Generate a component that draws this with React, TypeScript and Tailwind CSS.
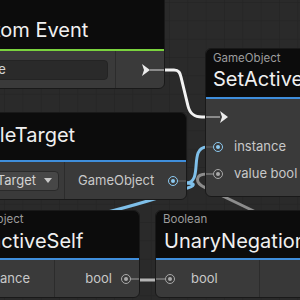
import React from 'react';

// Unity-style visual scripting graph: nodes sit on a free canvas, wires drawn in svg underneath.

const Port = ({ blue }: { blue?: boolean }) => (
  <span
    className={`flex h-[10px] w-[10px] shrink-0 items-center justify-center rounded-full border-[1.5px] ${
      blue ? 'border-[#8cc9f0]' : 'border-[#a9a9a9]'
    }`}
  >
    <span className={`h-[4px] w-[4px] rounded-full ${blue ? 'bg-[#8cc9f0]' : 'bg-[#a9a9a9]'}`} />
  </span>
);

const FlowArrow = () => (
  <svg width="8" height="12" viewBox="0 0 8 12" className="shrink-0">
    <polygon points="0,0 8,6 0,12 2,6" fill="#ececec" />
  </svg>
);

const Wires = () => (
  <svg className="absolute inset-0" width="300" height="300">
    <defs>
      <pattern id="grid" width="18.33" height="18.33" x="5" y="3" patternUnits="userSpaceOnUse">
        <path d="M18.33 0V18.33H0" fill="none" stroke="#222222" strokeWidth="1" />
      </pattern>
    </defs>
    <rect width="300" height="300" fill="url(#grid)" />
    {/* control flow */}
    <path
      d="M164 70 L174 70 C179 70 180 73 181 77 L188 106 C190 114 194 117 202 117 L207 117"
      fill="none"
      stroke="#f2f2f2"
      strokeWidth="3"
    />
    {/* GameObject -> instance */}
    <path d="M186 183 C204 183 188 147 207 147" fill="none" stroke="#7fc0ea" strokeWidth="3" />
    <path d="M186 183 C196 183 196 186 184 189 C165 196 140 204 100 214" fill="none" stroke="#7fc0ea" strokeWidth="3" />
    {/* bool -> value */}
    <path d="M207 174 C195 174 194 183 206 188 L262 215" fill="none" stroke="#8c8c8c" strokeWidth="3" />
    <path d="M138 280 L157 280" fill="none" stroke="#b4b4b4" strokeWidth="3" />
  </svg>
);

export default function App() {
  return (
    <div className="relative h-[300px] w-[300px] overflow-hidden bg-[#2a2a2a] font-['Inter',sans-serif]">
      <Wires />

      {/* Custom Event */}
      <div className="absolute left-[-52px] top-[-10px] w-[217px] overflow-hidden rounded-[6px] border border-[#191919] bg-[#3a3a3a]">
        <div className="h-[58px] whitespace-nowrap bg-[#0c0c0c] pl-[8px] pt-[27px] text-[20px] leading-[24px] text-[#f0f0f0]">
          Custom Event
        </div>
        <div className="h-[2px] bg-[#7ad33e]" />
        <div className="flex h-[37px]">
          <div className="flex w-[167px] items-center border-r border-[#2c2c2c] pl-[12px]">
            <div className="flex h-[20px] w-[147px] items-center overflow-hidden whitespace-nowrap rounded-[4px] border border-[#242424] bg-[#2a2a2a] pl-[2px] text-[13px] text-[#d2d2d2]">
              Toggle
            </div>
          </div>
          <div className="flex flex-1 items-center justify-end">
            <FlowArrow />
            <div className="h-[2px] w-[14px] bg-[#8a8a8a]" />
          </div>
        </div>
      </div>

      {/* SetActive */}
      <div className="absolute left-[205px] top-[48px] w-[160px] overflow-hidden rounded-[6px] border border-[#191919] bg-[#3a3a3a]">
        <div className="h-[48px] whitespace-nowrap bg-[#0c0c0c] pl-[7px] pt-[2px]">
          <div className="text-[11.5px] leading-[14px] text-[#9c9c9c]">GameObject</div>
          <div className="mt-[2px] text-[20px] leading-[24px] text-[#f0f0f0]">SetActive</div>
        </div>
        <div className="h-[2px] bg-[#3f8edb]" />
        <div className="flex flex-col pb-[10px] pt-[6px] text-[13px] text-[#c8c8c8]">
          <div className="flex h-[24px] items-center">
            <div className="h-[2px] w-[14px] bg-[#8a8a8a]" />
            <FlowArrow />
          </div>
          <div className="mt-[6px] flex h-[24px] items-center whitespace-nowrap">
            <div className="h-[2px] w-[7px] bg-[#505050]" />
            <Port blue />
            <span className="ml-[11px]">instance</span>
          </div>
          <div className="mt-[3px] flex h-[24px] items-center whitespace-nowrap">
            <div className="h-[2px] w-[7px] bg-[#6a6a6a]" />
            <Port />
            <span className="ml-[11px]">value bool</span>
          </div>
        </div>
      </div>

      {/* ToggleTarget variable */}
      <div className="absolute left-[-60px] top-[112px] w-[247px] overflow-hidden rounded-[6px] border border-[#191919] bg-[#3a3a3a]">
        <div className="h-[47px] whitespace-nowrap bg-[#0c0c0c] pl-[11px] pt-[10px] text-[20px] leading-[24px] text-[#f0f0f0]">
          ToggleTarget
        </div>
        <div className="h-[2px] bg-[#3f8edb]" />
        <div className="flex h-[37px] text-[13px] text-[#c8c8c8]">
          <div className="flex w-[124px] items-center border-r border-[#2c2c2c] pl-[8px]">
            <div className="flex h-[20px] w-[110px] items-center justify-end gap-[8px] whitespace-nowrap rounded-[4px] border border-[#2a2a2a] bg-[#474747] pr-[6px] text-[#d4d4d4]">
              <span>ToggleTarget</span>
              <svg width="8" height="5" viewBox="0 0 8 5" className="shrink-0">
                <polygon points="0,0 8,0 4,5" fill="#c8c8c8" />
              </svg>
            </div>
          </div>
          <div className="flex flex-1 items-center pl-[13px]">
            <span>GameObject</span>
            <span className="ml-auto">
              <Port blue />
            </span>
            <div className="h-[2px] w-[8px] bg-[#505050]" />
          </div>
        </div>
      </div>

      {/* activeSelf */}
      <div className="absolute left-[-60px] top-[210px] w-[200px] overflow-hidden rounded-[6px] border border-[#191919] bg-[#3a3a3a]">
        <div className="h-[47px] whitespace-nowrap bg-[#0c0c0c] pt-[1px]">
          <div className="pl-[15px] text-[11.5px] leading-[14px] text-[#9c9c9c]">GameObject</div>
          <div className="mt-[3px] pl-[49px] text-[20px] leading-[24px] text-[#f0f0f0]">activeSelf</div>
        </div>
        <div className="h-[2px] bg-[#3f8edb]" />
        <div className="flex h-[37px] text-[13px] text-[#c8c8c8]">
          <div className="flex w-[114px] items-center border-r border-[#2c2c2c] pl-[37px]">instance</div>
          <div className="flex flex-1 items-center justify-end">
            <span>bool</span>
            <span className="ml-[9px]">
              <Port />
            </span>
            <div className="h-[2px] w-[8px] bg-[#6a6a6a]" />
          </div>
        </div>
      </div>

      {/* UnaryNegation */}
      <div className="absolute left-[155px] top-[210px] w-[160px] overflow-hidden rounded-[6px] border border-[#191919] bg-[#3a3a3a]">
        <div className="h-[47px] whitespace-nowrap bg-[#0c0c0c] pl-[7px] pt-[1px]">
          <div className="text-[11.5px] leading-[14px] text-[#9c9c9c]">Boolean</div>
          <div className="mt-[3px] pl-[1px] text-[20px] leading-[24px] text-[#f0f0f0]">UnaryNegation</div>
        </div>
        <div className="h-[2px] bg-[#3f8edb]" />
        <div className="flex h-[37px] text-[13px] text-[#c8c8c8]">
          <div className="flex w-[104px] items-center border-r border-[#2c2c2c]">
            <div className="h-[2px] w-[9px] bg-[#6a6a6a]" />
            <Port />
            <span className="ml-[16px]">bool</span>
          </div>
          <div className="flex-1 bg-[#383838]" />
        </div>
      </div>
    </div>
  );
}
